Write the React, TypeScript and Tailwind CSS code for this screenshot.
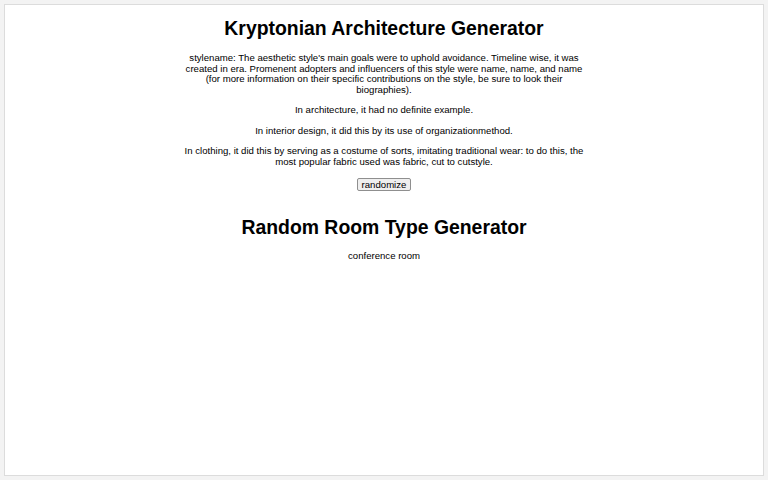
import { useState } from "react";

const rooms = ["conference room", "break room", "lobby", "storage closet", "server room"];

export default function App() {
  const [room, setRoom] = useState(rooms[0]);

  const randomize = () => {
    setRoom(rooms[Math.floor(Math.random() * rooms.length)]);
  };

  return (
    <div className="h-[480px] w-[768px] bg-[#f3f3f3] p-[4px] font-['Liberation_Sans',Arial,sans-serif] text-black">
      <div className="h-full border border-[#dcdcdc] bg-white">
        <div className="mx-auto w-[400px] text-center">
          <h1 className="mt-[11px] text-[19.4px] font-bold leading-[24px]">Kryptonian Architecture Generator</h1>
          <div className="mt-[13px] text-[9.6px] leading-[10.5px]">
            <p>
              stylename: The aesthetic style's main goals were to uphold avoidance. Timeline wise, it was created in era. Promenent adopters and influencers of this style were name, name, and name (for more information on their specific contributions on the style, be sure to look their biographies).
            </p>
            <p className="mt-[10px]">In architecture, it had no definite example.</p>
            <p className="mt-[10px]">In interior design, it did this by its use of organizationmethod.</p>
            <p className="mt-[10px]">
              In clothing, it did this by serving as a costume of sorts, imitating traditional wear: to do this, the most popular fabric used was fabric, cut to cutstyle.
            </p>
          </div>
          <button
            onClick={randomize}
            className="mt-[11px] h-[13px] border border-[#8f8f8f] bg-[#efefef] px-[4px] text-[9.6px] leading-[11px] rounded-[2px]"
          >
            randomize
          </button>
          <h1 className="mt-[20px] text-[19.4px] font-bold leading-[24px]">Random Room Type Generator</h1>
          <p className="mt-[12px] text-[9.6px] leading-[10.5px]">{room}</p>
        </div>
      </div>
    </div>
  );
}
